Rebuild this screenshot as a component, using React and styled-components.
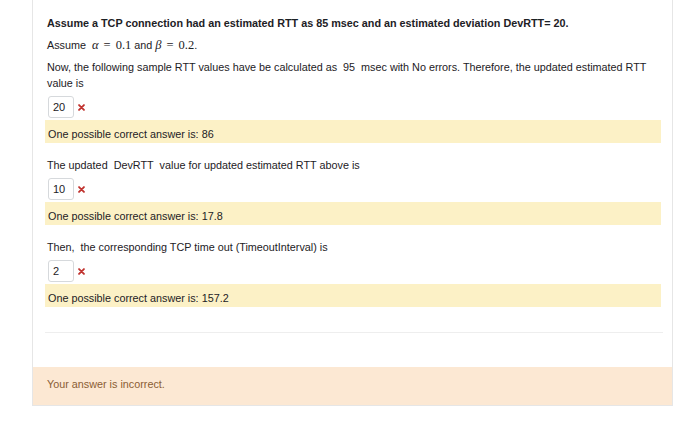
import React from 'react'
import styled, { createGlobalStyle } from 'styled-components'

const GlobalStyle = createGlobalStyle`
  body {
    margin: 0;
    background: #ffffff;
    font-family: 'Liberation Sans', Arial, sans-serif;
    color: #1d2125;
  }
`

const Card = styled.div`
  margin-left: 32px;
  width: 641px;
  box-sizing: border-box;
  border: 1px solid #e6e6e6;
  border-top: none;
  background: #ffffff;
`

const Content = styled.div`
  padding: 15px 11px 34px 14px;
  font-size: 10.8px;
  line-height: 16px;
`

const Heading = styled.p`
  margin: 0 0 6px;
  font-weight: bold;
`

const Para = styled.p`
  margin: 0 0 ${(p) => p.gap || 5}px;
`

const MathVar = styled.span`
  font-family: 'Liberation Serif', 'Times New Roman', serif;
  font-style: ${(p) => (p.italic ? 'italic' : 'normal')};
  font-size: 12.5px;
  padding: 0 ${(p) => p.pad || 0}px;
`

const AnswerRow = styled.div`
  display: flex;
  align-items: center;
  gap: 4px;
  margin: 0 0 2px 1px;
`

const AnswerBox = styled.div`
  box-sizing: border-box;
  width: 26px;
  height: 22px;
  border: 1px solid #d6d9dc;
  border-radius: 3px;
  padding-left: 4px;
  display: flex;
  align-items: center;
  font-size: 11px;
`

const Cross = styled.svg`
  width: 7px;
  height: 7px;
`

const RightAnswer = styled.div`
  margin: 0 0 14px -2px;
  padding: 6px 3px 1px;
  background: #fcf1c6;
`

const Divider = styled.div`
  margin: 25px -2px 0 -2px;
  border-top: 1px solid #eeeeee;
`

const Feedback = styled.div`
  padding: 9px 14px 13px;
  height: 16px;
  background: #fce8d3;
  color: #8a5d33;
  font-size: 10.8px;
  line-height: 16px;
`

function WrongMark() {
  return (
    <Cross viewBox="0 0 10 10">
      <path d="M1.5 1.5 L8.5 8.5 M8.5 1.5 L1.5 8.5" stroke="#c0322e" strokeWidth="2.6" strokeLinecap="round" />
    </Cross>
  )
}

function Part({ prompt, answer, correct, last }) {
  return (
    <>
      <Para>{prompt}</Para>
      <AnswerRow>
        <AnswerBox>{answer}</AnswerBox>
        <WrongMark />
      </AnswerRow>
      <RightAnswer style={last ? { marginBottom: 0 } : undefined}>
        One possible correct answer is: {correct}
      </RightAnswer>
    </>
  )
}

export default function App() {
  return (
    <>
      <GlobalStyle />
      <Card>
        <Content>
          <Heading>
            Assume a TCP connection had an estimated RTT as 85 msec and an estimated deviation DevRTT= 20.
          </Heading>
          <Para gap={6}>
            Assume&nbsp; <MathVar italic>α</MathVar> <MathVar pad={2}>=</MathVar> <MathVar>0.1</MathVar> and{' '}
            <MathVar italic>β</MathVar> <MathVar pad={2}>=</MathVar> <MathVar>0.2</MathVar>.
          </Para>
          <Part
            prompt={
              <>
                Now, the following sample RTT values have be calculated as&nbsp; 95&nbsp; msec with No errors. Therefore,
                the updated estimated RTT value is
              </>
            }
            answer="20"
            correct="86"
          />
          <Part
            prompt={<>The updated&nbsp; DevRTT&nbsp; value for updated estimated RTT above is</>}
            answer="10"
            correct="17.8"
          />
          <Part
            prompt={<>Then,&nbsp; the corresponding TCP time out (TimeoutInterval) is</>}
            answer="2"
            correct="157.2"
            last
          />
          <Divider />
        </Content>
        <Feedback>Your answer is incorrect.</Feedback>
      </Card>
    </>
  )
}
